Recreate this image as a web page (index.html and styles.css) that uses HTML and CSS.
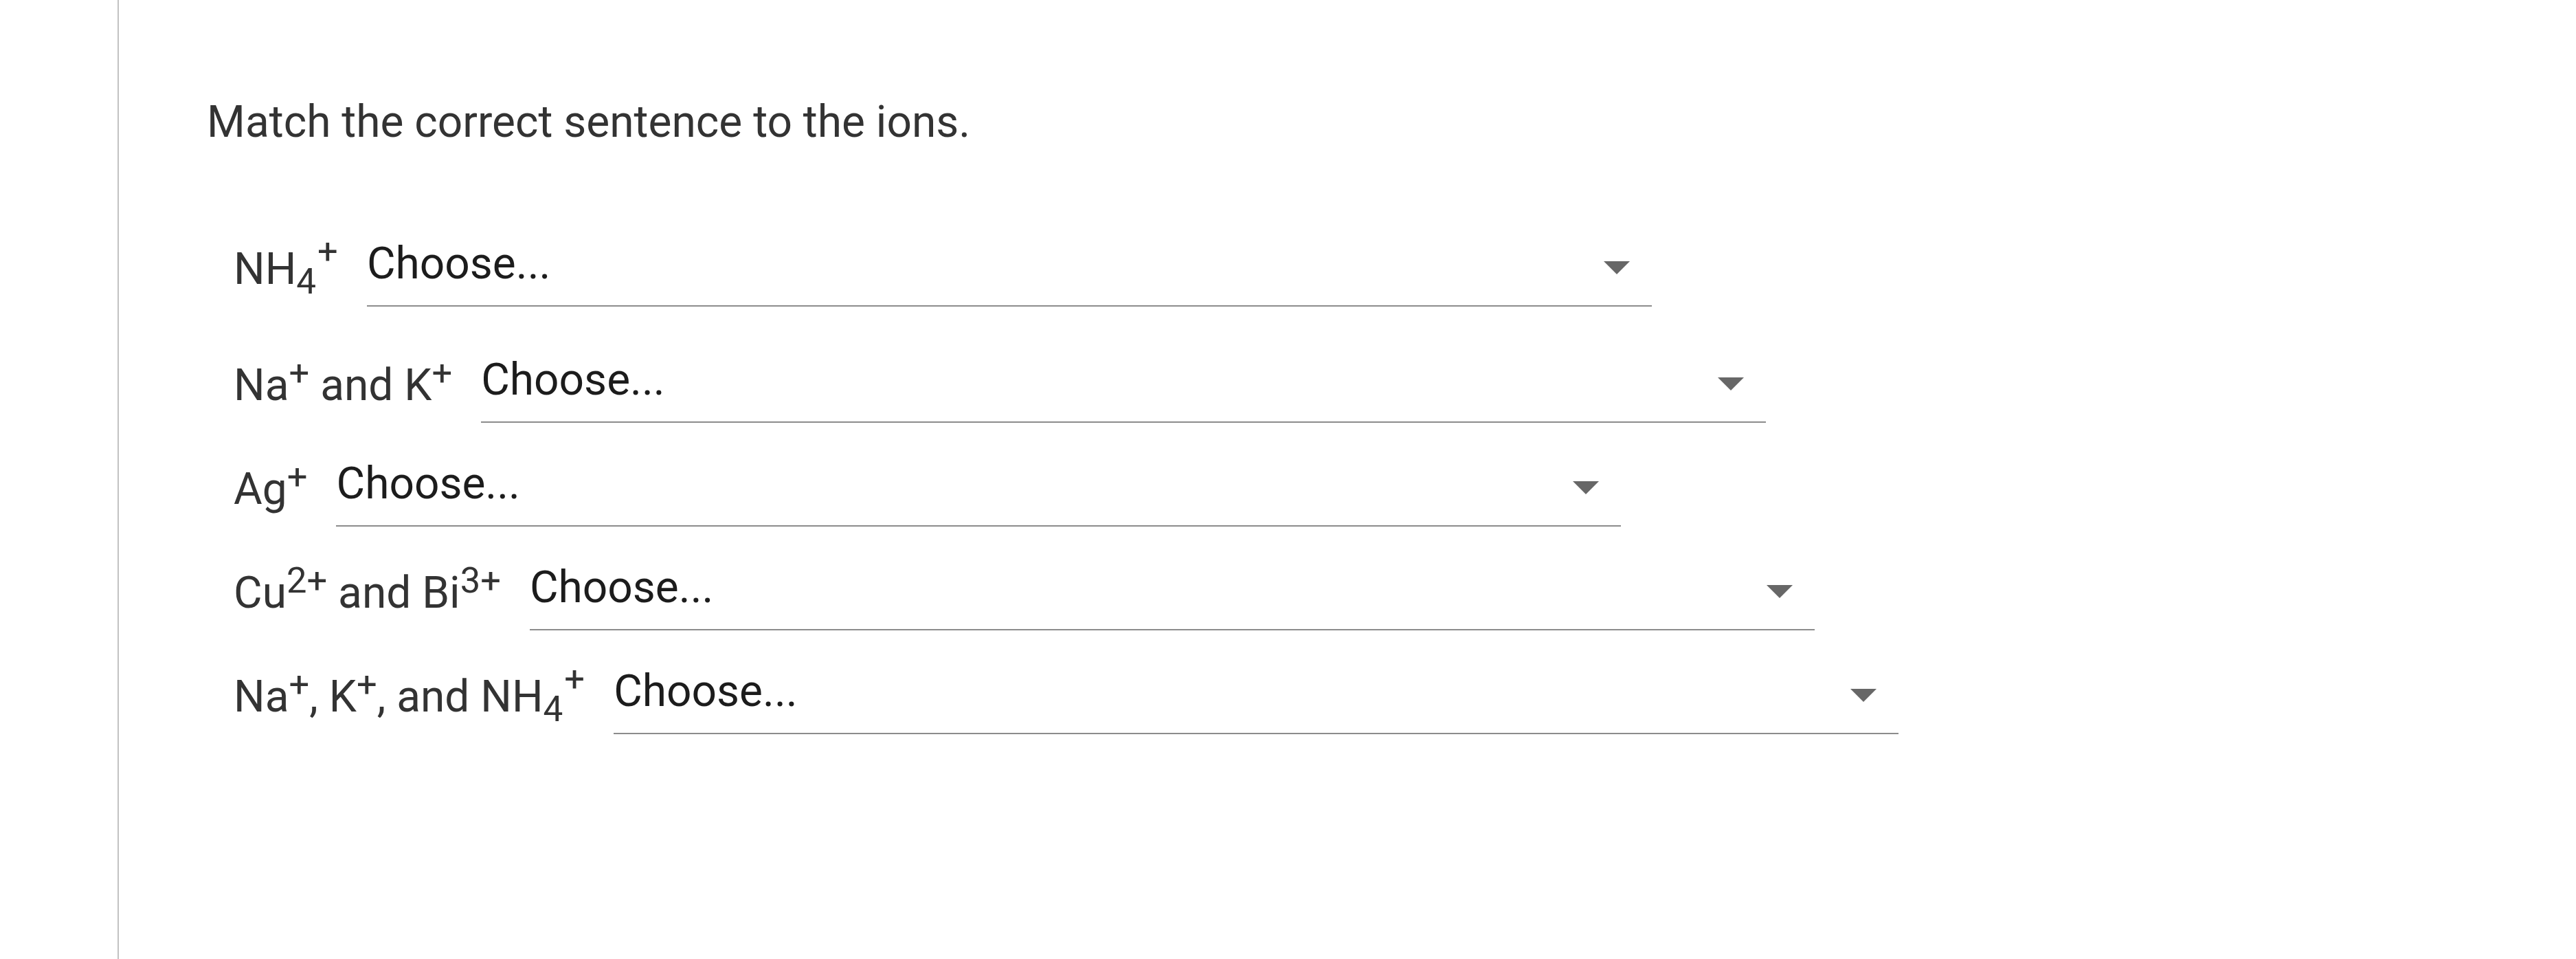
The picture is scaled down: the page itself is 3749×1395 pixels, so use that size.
FILE: index.html
```html
<!DOCTYPE html>
<html lang="en">
<head>
<meta charset="utf-8">
<title>Match the ions</title>
<link rel="stylesheet" href="styles.css">
</head>
<body>
<div class="page">
  <div class="question">
    <p class="qtext">Match the correct sentence to the ions.</p>
    <div class="rows">
      <div class="row tall">
        <span class="label">NH<sub>4</sub><sup class="hi">+</sup></span>
        <div class="select"><span class="value">Choose...</span><span class="caret"></span></div>
      </div>
      <div class="row">
        <span class="label">Na<sup>+</sup> and K<sup>+</sup></span>
        <div class="select"><span class="value">Choose...</span><span class="caret"></span></div>
      </div>
      <div class="row">
        <span class="label">Ag<sup>+</sup></span>
        <div class="select"><span class="value">Choose...</span><span class="caret"></span></div>
      </div>
      <div class="row">
        <span class="label">Cu<sup>2+</sup> and Bi<sup>3+</sup></span>
        <div class="select"><span class="value">Choose...</span><span class="caret"></span></div>
      </div>
      <div class="row tall">
        <span class="label">Na<sup>+</sup>, K<sup>+</sup>, and NH<sub>4</sub><sup class="hi">+</sup></span>
        <div class="select"><span class="value">Choose...</span><span class="caret"></span></div>
      </div>
    </div>
  </div>
</div>
</body>
</html>
```
FILE: styles.css
```css
html, body {
  margin: 0;
  padding: 0;
  background: #ffffff;
}

body {
  font-family: Roboto, "Liberation Sans", Arial, sans-serif;
  font-size: 64px;
  color: #333333;
}

.page {
  margin-left: 171px;
  border-left: 2px solid #c2c2c2;
  min-height: 100vh;
  box-sizing: border-box;
  padding: 130px 0 0 128px;
}

.qtext {
  margin: 0;
  line-height: 96px;
  color: #333333;
}

.rows {
  margin-top: 118px;
  padding-left: 39px;
  display: flex;
  flex-direction: column;
  gap: 49px;
}

.row {
  display: flex;
  align-items: flex-start;
}

.row.tall {
  padding-bottom: 18px;
}

.label {
  line-height: 96px;
  white-space: nowrap;
  color: #333333;
}

.label sup,
.label sub {
  line-height: 0;
}

.label sup {
  font-size: 0.82em;
  vertical-align: 22px;
}

.label sup.hi {
  vertical-align: 30px;
  margin-left: 2px;
}

.label sub {
  font-size: 0.8em;
  vertical-align: -14px;
}

.select {
  margin-left: 42px;
  width: 1870px;
  box-sizing: border-box;
  display: flex;
  justify-content: space-between;
  align-items: flex-start;
  line-height: 80px;
  padding-bottom: 20px;
  border-bottom: 2px solid #8c8c8c;
  color: #1c1c1c;
}

.caret {
  width: 0;
  height: 0;
  margin-top: 36px;
  margin-right: 32px;
  border-left: 19.5px solid transparent;
  border-right: 19.5px solid transparent;
  border-top: 19px solid #676767;
}
```
